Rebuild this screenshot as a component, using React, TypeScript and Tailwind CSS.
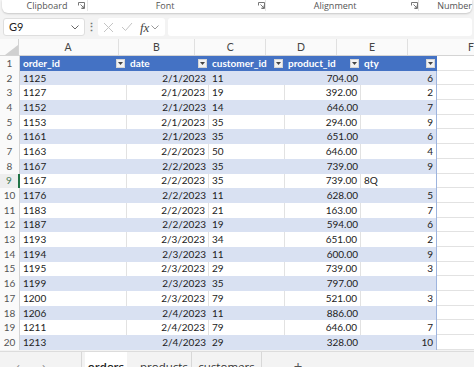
import { ReactNode } from 'react';

type Row = [string, string, string, string, string, string?];

const rows: Row[] = [
  ['1125', '2/1/2023', '11', '704.00', '6'],
  ['1127', '2/1/2023', '19', '392.00', '2'],
  ['1152', '2/1/2023', '14', '646.00', '7'],
  ['1153', '2/1/2023', '35', '294.00', '9'],
  ['1161', '2/1/2023', '35', '651.00', '6'],
  ['1163', '2/2/2023', '50', '646.00', '4'],
  ['1167', '2/2/2023', '35', '739.00', '9'],
  ['1167', '2/2/2023', '35', '739.00', '', '8Q'],
  ['1176', '2/2/2023', '11', '628.00', '5'],
  ['1183', '2/2/2023', '21', '163.00', '7'],
  ['1187', '2/2/2023', '19', '594.00', '6'],
  ['1193', '2/3/2023', '34', '651.00', '2'],
  ['1194', '2/3/2023', '11', '600.00', '9'],
  ['1195', '2/3/2023', '29', '739.00', '3'],
  ['1199', '2/3/2023', '35', '797.00', ''],
  ['1200', '2/3/2023', '79', '521.00', '3'],
  ['1206', '2/4/2023', '11', '886.00', ''],
  ['1211', '2/4/2023', '79', '646.00', '7'],
  ['1213', '2/4/2023', '29', '328.00', '10'],
];

const Launcher = () => (
  <svg width="7" height="7" viewBox="0 0 7 7" className="shrink-0">
    <path d="M0.5 3.5V0.5H6.5V6.5H3.5" fill="none" stroke="#777" strokeWidth="1" />
    <path d="M2.5 2.5L6 6M6 3.5V6H3.5" fill="none" stroke="#777" strokeWidth="1" />
  </svg>
);

const Chevron = ({ color = '#666' }: { color?: string }) => (
  <svg width="8" height="5" viewBox="0 0 8 5">
    <path d="M0.5 0.5L4 4L7.5 0.5" fill="none" stroke={color} strokeWidth="1" />
  </svg>
);

const FilterButton = () => (
  <span className="w-[9px] h-[9px] bg-[#f2f2f2] border border-[#d6d6d6] flex items-center justify-center shrink-0">
    <svg width="5" height="3" viewBox="0 0 5 3">
      <path d="M0 0H5L2.5 3Z" fill="#444" />
    </svg>
  </span>
);

const HeaderCell = ({ w, label }: { w: string; label: string }) => (
  <div className={`${w} h-full flex items-center justify-between pl-[3px] pr-[2px] bg-[#4472c4] text-white font-bold`}>
    <span>{label}</span>
    <FilterButton />
  </div>
);

function Cell({ w, banded, right, last, children }: { w: string; banded: boolean; right?: boolean; last?: boolean; children?: ReactNode }) {
  return (
    <div
      className={`${w} h-full flex items-center px-[3px] whitespace-nowrap ${right ? 'justify-end' : 'justify-start'} ${
        banded ? 'bg-[#d9e1f2]' : 'bg-white border-r border-[#e2e2e2]'
      } ${last ? 'border-r border-r-[#9db4de]' : ''}`}
    >
      {children}
    </div>
  );
}

const widths = ['w-[107px]', 'w-[82px]', 'w-[76px]', 'w-[76px]', 'w-[76px]'];

export default function App() {
  return (
    <div className="w-[474px] h-[367px] overflow-hidden bg-[#f3f3f3] flex flex-col font-['Lato',sans-serif] text-[10px] text-[#222]">
      {/* ribbon group labels */}
      <div className="h-[13px] bg-white rounded-b-[6px] mx-[2px] shadow-[0_1px_2px_rgba(0,0,0,0.18)] flex items-start text-[9px] text-[#555] font-['Open_Sans',sans-serif] leading-[10px] shrink-0">
        <div className="w-[88px] flex items-center border-r border-[#e4e4e4] h-[11px]">
          <span className="pl-[14px] w-[76px] text-center">Clipboard</span>
          <Launcher />
        </div>
        <div className="w-[181px] flex items-center border-r border-[#e4e4e4] h-[11px]">
          <span className="pl-[47px] w-[107px] text-center">Font</span>
          <span className="ml-[63px]">
            <Launcher />
          </span>
        </div>
        <div className="w-[156px] flex items-center border-r border-[#e4e4e4] h-[11px]">
          <span className="pl-[39px] w-[99px] text-center">Alignment</span>
          <span className="ml-[46px]">
            <Launcher />
          </span>
        </div>
        <div className="flex-1 flex items-center h-[11px]">
          <span className="pl-[18px]">Number</span>
        </div>
      </div>

      {/* formula bar */}
      <div className="mt-[5px] h-[18px] flex items-stretch shrink-0">
        <div className="ml-[3px] w-[82px] bg-white border border-[#dedede] rounded-[3px] flex items-center justify-between pl-[5px] pr-[5px] text-[11px] text-[#222]">
          <span>G9</span>
          <Chevron />
        </div>
        <div className="w-[13px] flex items-center justify-center text-[#777] text-[11px] font-bold">⋮</div>
        <div className="w-[67px] bg-white rounded-[3px] flex items-center pl-[5px] gap-[7px]">
          <svg width="11" height="11" viewBox="0 0 11 11">
            <path d="M1 1L10 10M10 1L1 10" stroke="#c4c4c4" strokeWidth="1" />
          </svg>
          <svg width="12" height="10" viewBox="0 0 12 10">
            <path d="M1 5L4.5 8.5L11 1" fill="none" stroke="#c4c4c4" strokeWidth="1" />
          </svg>
          <span className="font-['Liberation_Serif',serif] italic text-[13px] text-[#444] leading-none">fx</span>
          <span className="-ml-[5px]">
            <Chevron color="#999" />
          </span>
        </div>
        <div className="ml-[3px] mr-[2px] flex-1 bg-white rounded-[3px]" />
      </div>

      {/* column headers */}
      <div className="mt-[3px] h-[17px] flex bg-[#fafafa] border-b border-[#d4d4d4] text-[#444] text-[10.5px] shrink-0">
        <div className="w-[20px] h-full border-r border-[#d4d4d4] flex items-end justify-end">
          <svg width="13" height="10" viewBox="0 0 13 10">
            <path d="M13 0V10H0Z" fill="#d0d0d0" />
          </svg>
        </div>
        {['A', 'B', 'C', 'D', 'E'].map((c, i) => (
          <div key={c} className={`${widths[i]} h-full border-r border-[#e0e0e0] flex items-center justify-center pt-[1px]`}>
            {c}
          </div>
        ))}
        <div className="flex-1 h-full flex items-center justify-center pl-[60px] pt-[1px]">F</div>
      </div>

      {/* grid */}
      <div className="flex flex-col bg-white shrink-0">
        <div className="flex h-[14.7px]">
          <div className="w-[20px] h-full bg-[#fafafa] border-r border-[#d4d4d4] flex items-center justify-center text-[#555]">1</div>
          <HeaderCell w={widths[0]} label="order_id" />
          <HeaderCell w={widths[1]} label="date" />
          <HeaderCell w={widths[2]} label="customer_id" />
          <HeaderCell w={widths[3]} label="product_id" />
          <HeaderCell w={widths[4]} label="qty" />
          <div className="flex-1 h-full border-b border-[#e2e2e2]" />
        </div>
        {rows.map((r, i) => {
          const n = i + 2;
          const banded = n % 2 === 0;
          const selected = n === 9;
          return (
            <div key={n} className="flex h-[14.7px]">
              <div
                className={`w-[20px] h-full flex items-center justify-center ${
                  selected ? 'text-[#3f7a55] border-r-2 border-[#217346] bg-[#eeeeee]' : 'bg-[#fafafa] text-[#555] border-r border-[#d4d4d4]'
                }`}
              >
                {n}
              </div>
              <Cell w={widths[0]} banded={banded}>{r[0]}</Cell>
              <Cell w={widths[1]} banded={banded} right>{r[1]}</Cell>
              <Cell w={widths[2]} banded={banded}>{r[2]}</Cell>
              <Cell w={widths[3]} banded={banded} right>{r[3]}</Cell>
              <Cell w={widths[4]} banded={banded} right={!r[5]} last>{r[5] ?? r[4]}</Cell>
              <div className="flex-1 h-full border-b border-[#e2e2e2]" />
            </div>
          );
        })}
      </div>

      {/* sheet tabs */}
      <div className="mt-[1px] flex-1 flex items-stretch bg-[#f3f3f3] border-t border-[#dcdcdc] text-[11.5px] text-[#333] font-['Open_Sans',sans-serif]">
        <div className="w-[82px] border-r border-[#d8d8d8] flex items-start pt-[5px] pl-[16px] gap-[22px] text-[#888] text-[13px]">
          <span>‹</span>
          <span>›</span>
        </div>
        <div className="ml-[3px] w-[42px] bg-white flex justify-center pt-[6px] font-semibold text-[#222]">orders</div>
        <div className="w-[65px] border-r border-[#d8d8d8] flex justify-center pt-[6px] pl-[10px]">products</div>
        <div className="w-[70px] border-r border-[#d8d8d8] flex justify-center pt-[6px]">customers</div>
        <div className="w-[72px] flex justify-center pt-[3px] text-[15px] text-[#555]">+</div>
      </div>
    </div>
  );
}
